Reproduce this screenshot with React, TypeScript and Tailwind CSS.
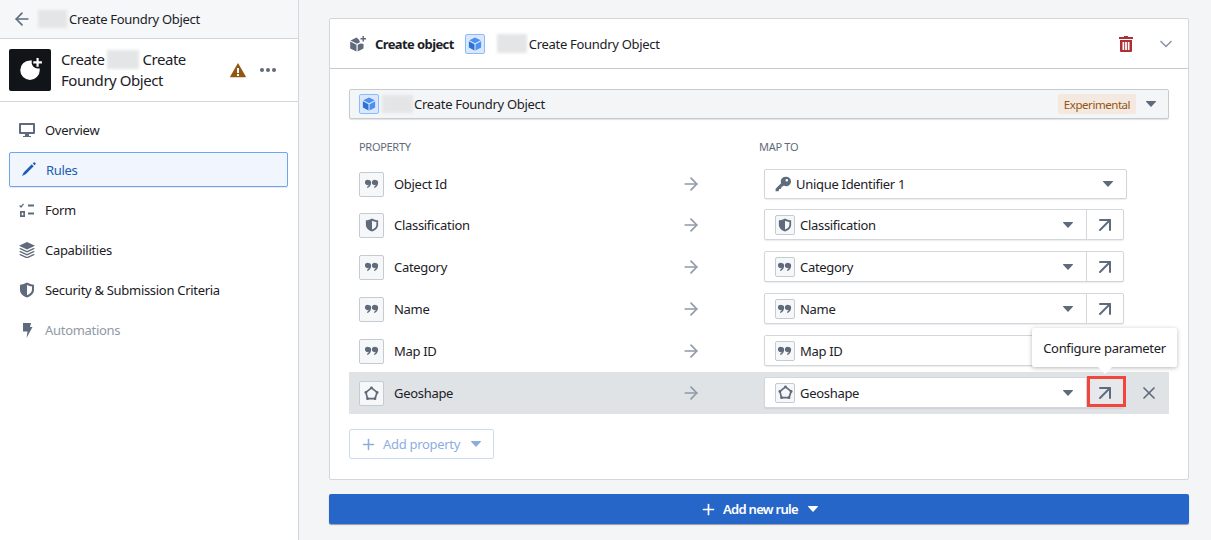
import React from 'react';
import { ArrowLeft, ArrowRight, ArrowUpRight, ChevronDown, Plus, X } from 'lucide-react';

const Redacted = ({ className }: { className: string }) => (
  <span className={`inline-block shrink-0 bg-[#e4e5e7] blur-[1.5px] ${className}`} />
);

const Caret = ({ className = 'text-[#5f6b7c]' }: { className?: string }) => (
  <svg viewBox="0 0 10 6" className={`h-[6px] w-[10px] shrink-0 ${className}`} fill="currentColor">
    <path d="M0.4 0h9.2a.4.4 0 0 1 .3.7L5.3 5.7a.4.4 0 0 1-.6 0L.1.7A.4.4 0 0 1 .4 0z" />
  </svg>
);

const QuoteIcon = () => (
  <svg viewBox="0 0 16 16" className="h-[14px] w-[14px]" fill="#5f6b7c">
    <path d="M4 3.500a3 3 0 0 1 3 3c0 3-1.700 5.200-4.300 6l-.5-1.200c1.100-.6 1.900-1.400 2.100-2.400A3 3 0 1 1 4 3.500z" />
    <path d="M12 3.500a3 3 0 0 1 3 3c0 3-1.700 5.200-4.300 6l-.5-1.200c1.100-.6 1.900-1.400 2.100-2.400A3 3 0 1 1 12 3.500z" />
  </svg>
);

const ShieldIcon = ({ size = 'h-[14px] w-[14px]' }: { size?: string }) => (
  <svg viewBox="0 0 16 16" className={size} fill="#5f6b7c">
    <path
      fillRule="evenodd"
      d="M8 0.500C5.800 1.800 3.500 2.500 1 2.700V8c0 3.400 3 6.200 7 7.500 4-1.300 7-4.100 7-7.500V2.700C12.500 2.500 10.200 1.800 8 .5zM8 3v10.200c2.800-1.100 4.800-3 5-5.200V4.500C11.200 4.300 9.600 3.800 8 3z"
    />
  </svg>
);

const GeoIcon = () => (
  <svg viewBox="0 0 16 16" className="h-[15px] w-[15px]" fill="none" stroke="#5f6b7c" strokeWidth="1.800" strokeLinejoin="round">
    <path d="M8 2l6 4.800-2.300 6.700H3.800L2 6.800z" />
    <circle cx="8" cy="2" r="1.500" fill="#5f6b7c" stroke="none" />
    <circle cx="14" cy="6.800" r="1.500" fill="#5f6b7c" stroke="none" />
    <circle cx="2" cy="6.800" r="1.500" fill="#5f6b7c" stroke="none" />
    <circle cx="3.800" cy="13.500" r="1.500" fill="#5f6b7c" stroke="none" />
    <circle cx="11.700" cy="13.500" r="1.500" fill="#5f6b7c" stroke="none" />
  </svg>
);

const KeyIcon = () => (
  <svg viewBox="0 0 16 16" className="h-[16px] w-[16px] shrink-0" fill="#5f6b7c">
    <path
      fillRule="evenodd"
      d="M10.500 0.800a4.700 4.700 0 0 0-4.400 6.400L.6 12.700v2.500h2.600l.8-.8v-1.500h1.500l1-1v-1.400h1.300l1-1a4.700 4.700 0 1 0 2.700-8.700zm1.300 2.200a1.300 1.300 0 1 1 0 2.600 1.300 1.300 0 0 1 0-2.600z"
    />
  </svg>
);

const CubeBadge = () => (
  <span className="flex h-[20px] w-[20px] shrink-0 items-center justify-center rounded-[2px] border border-[#8abbff] bg-[#dbe8fb]">
    <svg viewBox="0 0 16 16" className="h-[14px] w-[14px]">
      <path d="M8 .5l6.500 3.300L8 7.200 1.500 3.800z" fill="#4c90f0" />
      <path d="M1 4.800l6.400 3.400v7.200L1 12z" fill="#2d72d2" />
      <path d="M15 4.800L8.600 8.200v7.200L15 12z" fill="#4c90f0" />
    </svg>
  </span>
);

const TypeBadge = ({ children, small = false }: { children: React.ReactNode; small?: boolean }) => (
  <span
    className={`flex shrink-0 items-center justify-center rounded-[2px] border border-[#c5cbd3] bg-[#f6f7f9] ${
      small ? 'h-[20px] w-[20px]' : 'h-[25px] w-[25px]'
    }`}
  >
    {children}
  </span>
);

const MapSelect = ({ icon, label, active = false }: { icon: React.ReactNode; label: string; active?: boolean }) => (
  <div className="mb-px ml-[66px] flex h-[31px] w-[360px] rounded-[2px] border border-[#d3d6da] bg-white shadow-[0_1px_1px_rgba(17,20,24,0.08)]">
    <div className="flex flex-1 items-center pl-[10px] pr-[13px]">
      <TypeBadge small>{icon}</TypeBadge>
      <span className="ml-[5px] flex-1 pt-[2px]">{label}</span>
      <Caret />
    </div>
    <div className={`flex w-[37px] items-center justify-center border-l border-[#d3d6da] ${active ? 'bg-[#e6e8eb]' : ''}`}>
      <ArrowUpRight size={24} strokeWidth={2} color="#5f6b7c" />
    </div>
  </div>
);

const rows = [
  { label: 'Classification', icon: <ShieldIcon /> },
  { label: 'Category', icon: <QuoteIcon /> },
  { label: 'Name', icon: <QuoteIcon /> },
  { label: 'Map ID', icon: <QuoteIcon /> },
];

const PropertyCell = ({ icon, label }: { icon: React.ReactNode; label: string }) => (
  <>
    <div className="flex w-[325px] items-center gap-[10px]">
      <TypeBadge>{icon}</TypeBadge>
      <span className="pt-[2px]">{label}</span>
    </div>
    <ArrowRight size={20} strokeWidth={2} color="#8f99a8" className="-mx-[3px]" />
  </>
);

const NavItem = ({ icon, label, muted = false }: { icon: React.ReactNode; label: string; muted?: boolean }) => (
  <div className="flex h-[40px] items-center pl-[19px]">
    <span className="flex w-[16px] justify-center">{icon}</span>
    <span className={`ml-[10px] pt-[2px] ${muted ? 'text-[#8f99a8]' : ''}`}>{label}</span>
  </div>
);

export default function App() {
  return (
    <div className="flex h-[540px] w-[1211px] overflow-hidden bg-[#f4f5f7] font-['Noto_Sans',sans-serif] text-[13px] tracking-[-0.3px] text-[#1c2127]">
      <aside className="flex w-[299px] shrink-0 flex-col border-r border-[#d3d6da] bg-white">
        <div className="flex h-[39px] shrink-0 items-center border-b border-[#d3d6da] bg-[#f6f7f9] pl-[12px]">
          <ArrowLeft size={20} strokeWidth={2} color="#5f6b7c" />
          <Redacted className="ml-[6px] mr-[2px] h-[18px] w-[29px]" />
          <span className="pt-[2px]">Create Foundry Object</span>
        </div>
        <div className="flex h-[63px] shrink-0 items-center border-b border-[#d3d6da] pl-[9px] pr-[22px]">
          <div className="flex h-[42px] w-[42px] shrink-0 items-center justify-center rounded-[2px] bg-[#111418]">
            <svg viewBox="0 0 24 24" className="h-[26px] w-[26px]" fill="#fff">
              <path d="M12 3.200a9 9 0 1 0 9 9c0-.7-.1-1.300-.2-1.900a5.600 5.600 0 0 1-7-7c-.6-.1-1.200-.1-1.800-.1z" />
              <path d="M18 1h2v3h3v2h-3v3h-2V6h-3V4h3z" />
            </svg>
          </div>
          <div className="ml-[10px] w-[140px] text-[15px] leading-[21px] tracking-[-0.45px]">
            <div className="flex items-center">
              Create
              <Redacted className="mx-[3px] h-[19px] w-[32px]" />
              Create
            </div>
            <div>Foundry Object</div>
          </div>
          <svg viewBox="0 0 16 16" className="ml-auto h-[16px] w-[16px]" fill="#935610">
            <path
              fillRule="evenodd"
              d="M8 1l7.800 13.500a.5.500 0 0 1-.4.700H.6a.5.500 0 0 1-.4-.7zM7 6v5h2V6zm0 6v2h2v-2z"
            />
          </svg>
          <span className="ml-[14px] flex gap-[2px]">
            <span className="h-[4px] w-[4px] rounded-full bg-[#5f6b7c]" />
            <span className="h-[4px] w-[4px] rounded-full bg-[#5f6b7c]" />
            <span className="h-[4px] w-[4px] rounded-full bg-[#5f6b7c]" />
          </span>
        </div>
        <nav className="flex flex-col pt-[8px]">
          <NavItem
            label="Overview"
            icon={
              <svg viewBox="0 0 16 16" className="h-[16px] w-[16px]" fill="#5f6b7c">
                <path fillRule="evenodd" d="M1 1h14a1 1 0 0 1 1 1v9a1 1 0 0 1-1 1H1a1 1 0 0 1-1-1V2a1 1 0 0 1 1-1zm1 2v7h12V3zM6 12h4v2h2v1H4v-1h2z" />
              </svg>
            }
          />
          <div className="mb-[3px] ml-[9px] mr-[10px] mt-[2px] flex h-[35px] items-center rounded-[2px] border border-[#6fa4ef] bg-[#f0f5fe] pl-[11px] text-[#215db0] shadow-[0_1px_1px_rgba(17,20,24,0.1)]">
            <svg viewBox="0 0 16 16" className="h-[15px] w-[15px]" fill="#215db0">
              <path d="M11.500 2.500l2 2L5 13l-4 2 2-4zM12.500 1.500l1-1a1 1 0 0 1 1.300 0l.7.700a1 1 0 0 1 0 1.300l-1 1z" />
            </svg>
            <span className="ml-[10px] pt-[2px]">Rules</span>
          </div>
          <NavItem
            label="Form"
            icon={
              <svg viewBox="0 0 16 16" className="h-[16px] w-[16px]" fill="#5f6b7c">
                <path d="M1 3l1 1 2-2.500 1 .8L2.100 6 .2 4zM9 2.500h6v2H9zM9 10.500h6v2H9z" />
                <path fillRule="evenodd" d="M1 9h5v6H1zm1.700 1.700v2.600h1.600v-2.600z" />
              </svg>
            }
          />
          <NavItem
            label="Capabilities"
            icon={
              <svg viewBox="0 0 16 16" className="h-[16px] w-[16px]" fill="#5f6b7c">
                <path d="M8 0l8 3.700-8 3.700L0 3.700z" />
                <path d="M0 6.700l1.600-.7L8 9l6.400-3 1.600.7-8 3.700z" />
                <path d="M0 9.800l1.600-.8L8 12l6.400-3 1.600.8L8 13.500z" />
                <path d="M0 12.800l1.600-.8L8 15l6.400-3 1.600.8L8 16.500z" />
              </svg>
            }
          />
          <NavItem label="Security & Submission Criteria" icon={<ShieldIcon size="h-[16px] w-[16px]" />} />
          <NavItem
            label="Automations"
            muted
            icon={
              <svg viewBox="0 0 16 16" className="h-[16px] w-[16px]" fill="#5f6b7c">
                <path d="M4 1h8L11 5h2.500L7.500 16 8.500 9.500H4z" />
              </svg>
            }
          />
        </nav>
      </aside>

      <main className="flex flex-1 flex-col pl-[30px] pr-[22px] pt-[18px]">
        <section className="relative h-[462px] shrink-0 rounded-[2px] border border-[#d3d6da] bg-white">
          <header className="flex h-[50px] items-center border-b border-[#c5cbd3] pl-[20px] pr-[12px]">
            <svg viewBox="0 0 16 16" className="h-[16px] w-[16px]" fill="#5f6b7c">
              <path d="M6.500 1.500L.5 4.500 7 7.700l3-1.500-1-2.500zM.2 5.600v6.800L6.500 15.500V8.800zM13.500 8v4.400L7.700 15.500V8.800L10.500 7.400z" />
              <path d="M12.500 0h1.500v2h2v1.500h-2v2h-1.500v-2h-2V2h2z" />
            </svg>
            <span className="ml-[9px] pt-[2px] font-bold tracking-[-0.6px]">Create object</span>
            <span className="ml-[11px]">
              <CubeBadge />
            </span>
            <Redacted className="ml-[12px] mr-[2px] h-[19px] w-[30px]" />
            <span className="pt-[2px]">Create Foundry Object</span>
            <svg viewBox="0 0 16 16" className="ml-auto h-[16px] w-[16px]" fill="#ac2f33">
              <path fillRule="evenodd" d="M6 0h4v1h5v2H1V1h5zM2 4h12v11a1 1 0 0 1-1 1H3a1 1 0 0 1-1-1zm2.500 2v8h1.700V6zm2.600 0v8h1.800V6zm2.700 0v8h1.700V6z" />
            </svg>
            <ChevronDown size={20} strokeWidth={2} color="#8f99a8" className="ml-[22px]" />
          </header>

          <div className="px-[19px] pt-[20px]">
            <div className="flex h-[30px] items-center rounded-[2px] border border-[#c5cbd3] bg-[#f4f5f7] pl-[9px] pr-[12px] shadow-[0_1px_1px_rgba(17,20,24,0.12)]">
              <CubeBadge />
              <Redacted className="ml-[3px] mr-[1px] h-[18px] w-[31px]" />
              <span className="pt-[2px]">Create Foundry Object</span>
              <span className="ml-auto flex h-[20px] w-[78px] items-center justify-center rounded-[2px] bg-[#f3e9e0] pt-[2px] text-[11.5px] tracking-[-0.45px] text-[#935610]">
                Experimental
              </span>
              <span className="ml-[10px]">
                <Caret />
              </span>
            </div>

            <div className="flex h-[45px] items-end pb-[9px] pl-[10px] text-[11px] uppercase text-[#5f6b7c]">
              <span className="w-[400px]">Property</span>
              <span>Map to</span>
            </div>

            <div className="flex h-[40px] items-center pl-[10px]">
              <PropertyCell icon={<QuoteIcon />} label="Object Id" />
              <div className="ml-[66px] flex h-[30px] w-[363px] items-center rounded-[2px] border border-[#d3d6da] bg-white pl-[10px] pr-[13px] shadow-[0_1px_1px_rgba(17,20,24,0.08)]">
                <KeyIcon />
                <span className="ml-[5px] flex-1 pt-[2px]">Unique Identifier 1</span>
                <Caret />
              </div>
            </div>

            {rows.map((row) => (
              <div key={row.label} className="flex h-[42px] items-center pl-[10px]">
                <PropertyCell icon={row.icon} label={row.label} />
                <MapSelect icon={row.icon} label={row.label} />
              </div>
            ))}

            <div className="relative flex h-[42px] items-center bg-[#e0e3e6] pl-[10px]">
              <PropertyCell icon={<GeoIcon />} label="Geoshape" />
              <MapSelect icon={<GeoIcon />} label="Geoshape" active />
              <X size={20} strokeWidth={2} color="#5f6b7c" className="ml-[15px]" />
              <span className="absolute left-[738px] top-[4px] h-[31px] w-[39px] border-[3px] border-[#f2463c]" />
              <div className="absolute left-[683px] top-[-44px] flex h-[39px] w-[145px] items-center justify-center rounded-[2px] bg-white pt-[2px] shadow-[0_1px_4px_rgba(17,20,24,0.3)]">
                Configure parameter
                <span className="absolute bottom-[-5px] left-[68px] h-[10px] w-[10px] rotate-45 bg-white" />
              </div>
            </div>

            <button className="mt-[15px] flex h-[30px] w-[145px] items-center rounded-[2px] border border-[#cddcf3] bg-white pl-[10px] text-[#8eaddf]">
              <Plus size={17} strokeWidth={2.2} color="#8eaddf" />
              <span className="ml-[6px] pt-[2px]">Add property</span>
              <span className="ml-[11px]">
                <Caret className="text-[#8eaddf]" />
              </span>
            </button>
          </div>
        </section>

        <button className="mt-[14px] flex h-[30px] shrink-0 items-center justify-center rounded-[2px] bg-[#2666c8] font-semibold tracking-[-0.7px] text-white shadow-[0_1px_1px_rgba(17,20,24,0.4)]">
          <Plus size={17} strokeWidth={2.4} color="#fff" />
          <span className="ml-[6px] pt-[2px]">Add new rule</span>
          <span className="ml-[10px]">
            <Caret className="text-white" />
          </span>
        </button>
      </main>
    </div>
  );
}
